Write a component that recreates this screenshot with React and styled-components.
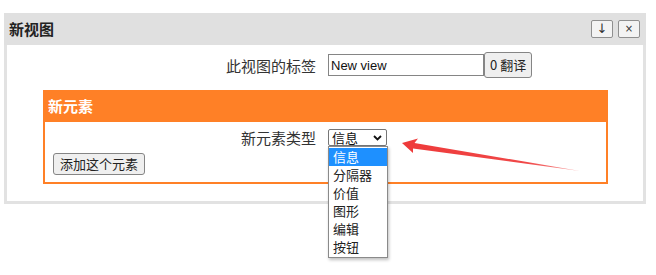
import React from "react";
import styled, { createGlobalStyle } from "styled-components";

const Global = createGlobalStyle`
  html, body { margin: 0; padding: 0; background: #fff; }
  body {
    font-family: "Noto Sans CJK SC", "Noto Sans", sans-serif;
    color: #222;
  }
  * { box-sizing: border-box; }
`;

const Page = styled.div`
  position: relative;
  width: 656px;
  height: 275px;
  padding: 13px 10px 0 4px;
`;

const Panel = styled.div`
  width: 642px;
  border: 3px solid #e2e2e2;
  border-top: 0;
`;

const PanelHeader = styled.div`
  display: flex;
  align-items: center;
  justify-content: space-between;
  height: 32px;
  margin: 0 -3px;
  padding: 0 6px 0 5px;
  background: #e0e0e0;
`;

const Title = styled.div`
  font-size: 15px;
  font-weight: 700;
  line-height: 20px;
  color: ${(p) => p.$color || "#222"};
`;

const HeaderButtons = styled.div`
  display: flex;
  gap: 5px;
`;

const IconButton = styled.button`
  width: 22px;
  height: 18px;
  padding: 0;
  border: 1px solid #8f8f8f;
  border-radius: 2px;
  background: #f3f3f3;
  font-family: "DejaVu Sans", sans-serif;
  font-size: ${(p) => p.$size || 12}px;
  line-height: 16px;
  color: #333;
  display: flex;
  align-items: center;
  justify-content: center;
`;

const Body = styled.div`
  padding: 7px 35px 17px 36px;
`;

const FormRow = styled.div`
  display: grid;
  grid-template-columns: ${(p) => p.$labelWidth}px auto;
  column-gap: 12px;
  align-items: center;
  margin-bottom: ${(p) => p.$mb || 0}px;
`;

const Label = styled.div`
  text-align: right;
  font-size: 15px;
  line-height: 17px;
  color: #333;
`;

const Controls = styled.div`
  display: flex;
  align-items: center;
`;

const TextInput = styled.input`
  width: 156px;
  height: 22px;
  border: 1px solid #858585;
  border-radius: 0;
  padding: 0 2px;
  font-family: "Liberation Sans", Arial, sans-serif;
  font-size: 13px;
  color: #111;
  outline: none;
`;

const Button = styled.button`
  display: block;
  height: ${(p) => p.$h || 22}px;
  padding: 0 ${(p) => p.$px || 5}px;
  border: 1px solid #858585;
  border-radius: 3px;
  background: #efefef;
  font-family: "Noto Sans CJK SC", sans-serif;
  font-size: 13px;
  line-height: 18px;
  color: #222;
  white-space: nowrap;
`;

const Section = styled.div`
  margin-top: 12px;
  border: 2px solid #ff8026;
  border-top: 0;
`;

const SectionHeader = styled.div`
  display: flex;
  align-items: center;
  height: 32px;
  margin: 0 -2px;
  padding: 0 0 0 5px;
  background: #ff8026;
`;

const SectionBody = styled.div`
  padding: 7px 8px 7px 8px;
  background: #fff;
`;

const SelectWrap = styled.div`
  position: relative;
  width: 59px;
  height: 17px;
`;

const SelectBox = styled.div`
  display: flex;
  align-items: center;
  justify-content: space-between;
  height: 17px;
  padding: 0 4px 0 3px;
  border: 1px solid #767676;
  border-radius: 2px;
  font-size: 13px;
  line-height: 15px;
  color: #111;
  background: #fff;
`;

const DropList = styled.div`
  position: absolute;
  top: 17px;
  left: 0;
  width: 60px;
  padding: 1px 0;
  border: 1px solid #8a8a8a;
  background: #fff;
  box-shadow: 1px 2px 3px rgba(0, 0, 0, 0.25);
  z-index: 2;
`;

const Option = styled.div`
  height: 18px;
  padding-left: 4px;
  font-size: 13px;
  line-height: 18px;
  background: ${(p) => (p.$active ? "#1e90ff" : "transparent")};
  color: ${(p) => (p.$active ? "#fff" : "#222")};
`;

const Overlay = styled.svg`
  position: absolute;
  left: 0;
  top: 0;
  pointer-events: none;
  z-index: 3;
`;

const options = ["信息", "分隔器", "价值", "图形", "编辑", "按钮"];

export default function App() {
  return (
    <>
      <Global />
      <Page>
        <Panel>
          <PanelHeader>
            <Title>新视图</Title>
            <HeaderButtons>
              <IconButton $size={13}>↓</IconButton>
              <IconButton $size={10}>×</IconButton>
            </HeaderButtons>
          </PanelHeader>
          <Body>
            <FormRow $labelWidth={273}>
              <Label>此视图的标签</Label>
              <Controls>
                <TextInput defaultValue="New view" />
                <Button $h={26} $px={5}>0 翻译</Button>
              </Controls>
            </FormRow>
            <Section>
              <SectionHeader>
                <Title $color="#fff">新元素</Title>
              </SectionHeader>
              <SectionBody>
                <FormRow $labelWidth={263} $mb={7}>
                  <Label>新元素类型</Label>
                  <SelectWrap>
                    <SelectBox>
                      <span>信息</span>
                      <svg width="9" height="6" viewBox="0 0 9 6">
                        <path d="M1 1 L4.5 4.5 L8 1" fill="none" stroke="#111" strokeWidth="1.8" />
                      </svg>
                    </SelectBox>
                    <DropList>
                      {options.map((o, i) => (
                        <Option key={o} $active={i === 0}>{o}</Option>
                      ))}
                    </DropList>
                  </SelectWrap>
                </FormRow>
                <Button $h={22} $px={6}>添加这个元素</Button>
              </SectionBody>
            </Section>
          </Body>
        </Panel>
        <Overlay width="656" height="275" viewBox="0 0 656 275">
          <defs>
            <linearGradient id="arw" x1="402" y1="143" x2="580" y2="171" gradientUnits="userSpaceOnUse">
              <stop offset="0" stopColor="#ee3a3a" />
              <stop offset="0.7" stopColor="#f04848" />
              <stop offset="1" stopColor="#f8a0a0" />
            </linearGradient>
          </defs>
          <polygon
            points="402,143 418,138.5 414.5,143 580,171 413,148.5 413,153"
            fill="url(#arw)"
          />
        </Overlay>
      </Page>
    </>
  );
}
